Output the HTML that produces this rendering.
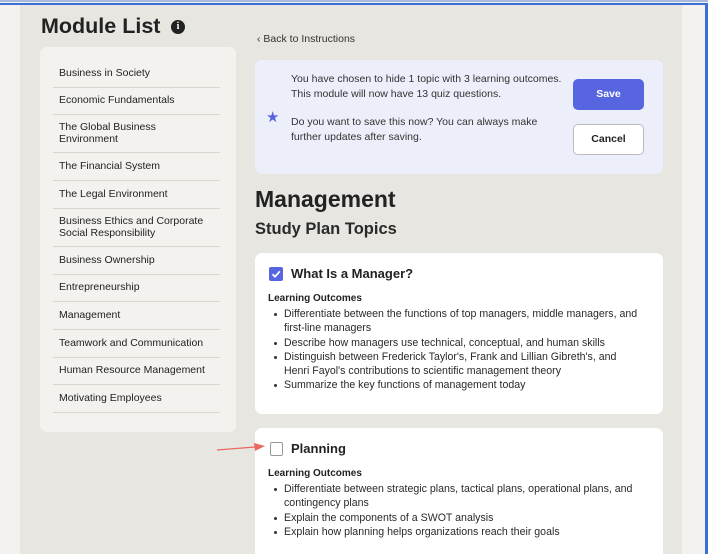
<!DOCTYPE html>
<html style="overflow:hidden;width:708px;height:554px"><head><style>
*{margin:0;padding:0;box-sizing:border-box}
body{width:708px;height:554px;overflow:hidden;background:#f3f2ef;font-family:"Liberation Sans",sans-serif;color:#222;position:relative}
.a{position:absolute}
.main{left:20px;top:5px;width:662px;height:549px;background:#e8e6e1}
.item{position:absolute;left:59px;font-size:10.5px;line-height:12px;color:#222}
.sep{position:absolute;left:53px;width:167px;height:1px;background:#d8d6d1}
.bt{font-size:10.5px;line-height:14.5px;color:#333}
ul{list-style:none}
li{position:relative;padding-left:16px;font-size:10.6px;line-height:14.3px;color:#2a2a2a;white-space:nowrap}
li:before{content:"";position:absolute;left:6px;top:6px;width:3px;height:3px;border-radius:50%;background:#333}
</style></head><body>
<div class="a" style="left:0;top:0;width:708px;height:2px;background:#a9b8df"></div>
<div class="a" style="left:0;top:3px;width:708px;height:2px;background:#3a6fd8"></div>
<div class="a" style="left:705px;top:3px;width:3px;height:551px;background:#3a6fd8"></div>
<div class="a main"></div>
<div class="a" style="left:41px;top:14px;font-size:21.5px;font-weight:bold;color:#222">Module List</div>
<div class="a" style="left:171px;top:20px;width:14px;height:14px;border-radius:50%;background:#222;color:#fff;font-size:10px;font-weight:bold;text-align:center;line-height:14px;font-family:'Liberation Serif',serif">i</div>
<div class="a" style="left:40px;top:47px;width:196px;height:385px;background:#f3f2ef;border-radius:7px"></div>
<div class="item" style="top:67px">Business in Society</div><div class="sep" style="top:87px"></div>
<div class="item" style="top:94px">Economic Fundamentals</div><div class="sep" style="top:114px"></div>
<div class="item" style="top:121px">The Global Business<br>Environment</div><div class="sep" style="top:152px"></div>
<div class="item" style="top:160px">The Financial System</div><div class="sep" style="top:180px"></div>
<div class="item" style="top:188px">The Legal Environment</div><div class="sep" style="top:208px"></div>
<div class="item" style="top:215px">Business Ethics and Corporate<br>Social Responsibility</div><div class="sep" style="top:246px"></div>
<div class="item" style="top:254px">Business Ownership</div><div class="sep" style="top:274px"></div>
<div class="item" style="top:281px">Entrepreneurship</div><div class="sep" style="top:301px"></div>
<div class="item" style="top:309px">Management</div><div class="sep" style="top:329px"></div>
<div class="item" style="top:337px">Teamwork and Communication</div><div class="sep" style="top:357px"></div>
<div class="item" style="top:364px">Human Resource Management</div><div class="sep" style="top:384px"></div>
<div class="item" style="top:392px">Motivating Employees</div><div class="sep" style="top:412px"></div>

<div class="a" style="left:257px;top:33px;font-size:10.5px;color:#333">‹ Back to Instructions</div>
<div class="a" style="left:255px;top:60px;width:408px;height:114px;background:#eceef9;border-radius:7px"></div>
<div class="a bt" style="left:291px;top:72px">You have chosen to hide 1 topic with 3 learning outcomes.<br>This module will now have 13 quiz questions.</div>
<div class="a bt" style="left:291px;top:115px">Do you want to save this now? You can always make<br>further updates after saving.</div>
<div class="a" style="left:266px;top:108px;color:#5766e0;font-size:15px">★</div>
<div class="a" style="left:573px;top:79px;width:71px;height:31px;background:#5766e0;border-radius:5px;color:#fff;font-size:10.5px;font-weight:bold;text-align:center;line-height:31px">Save</div>
<div class="a" style="left:573px;top:124px;width:71px;height:31px;background:#fff;border:1px solid #bbb;border-radius:5px;color:#222;font-size:10.5px;font-weight:bold;text-align:center;line-height:29px">Cancel</div>
<div class="a" style="left:255px;top:186px;font-size:23px;font-weight:bold;color:#222">Management</div>
<div class="a" style="left:255px;top:220px;font-size:16.5px;font-weight:bold;color:#2a2a2a">Study Plan Topics</div>

<div class="a" style="left:255px;top:253px;width:408px;height:161px;background:#fff;border-radius:7px"></div>
<div class="a" style="left:269px;top:267px;width:14px;height:14px;background:#5766e0;border-radius:2px"><svg width="14" height="14"><path d="M3.5 7.2 L6 9.7 L10.8 4.3" stroke="#fff" stroke-width="1.8" fill="none"/></svg></div>
<div class="a" style="left:291px;top:266px;font-size:13px;font-weight:bold;color:#222">What Is a Manager?</div>
<div class="a" style="left:268px;top:293px;font-size:10px;font-weight:bold">Learning Outcomes</div>
<ul class="a" style="left:268px;top:307px;width:400px">
<li>Differentiate between the functions of top managers, middle managers, and<br>first-line managers</li>
<li>Describe how managers use technical, conceptual, and human skills</li>
<li>Distinguish between Frederick Taylor's, Frank and Lillian Gibreth's, and<br>Henri Fayol's contributions to scientific management theory</li>
<li>Summarize the key functions of management today</li>
</ul>

<div class="a" style="left:255px;top:428px;width:408px;height:126px;background:#fff;border-radius:7px 7px 0 0"></div>
<div class="a" style="left:270px;top:442px;width:13px;height:14px;border:1px solid #999;border-radius:2px;background:#fff"></div>
<div class="a" style="left:291px;top:441px;font-size:13px;font-weight:bold;color:#222">Planning</div>
<div class="a" style="left:268px;top:468px;font-size:10px;font-weight:bold">Learning Outcomes</div>
<ul class="a" style="left:268px;top:482px;width:400px">
<li>Differentiate between strategic plans, tactical plans, operational plans, and<br>contingency plans</li>
<li>Explain the components of a SWOT analysis</li>
<li>Explain how planning helps organizations reach their goals</li>
</ul>
<svg class="a" style="left:215px;top:440px" width="52" height="14"><path d="M2 10 L40 7" stroke="#e86a5f" stroke-width="1.2"/><path d="M50 6 L39 3 L40 11 Z" fill="#e86a5f"/></svg>
</body></html>
